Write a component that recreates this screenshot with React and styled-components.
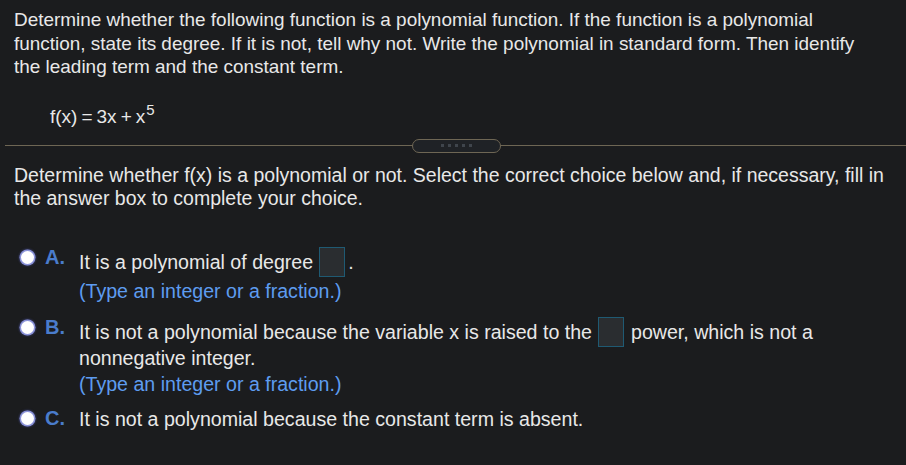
import React from "react";
import styled, { createGlobalStyle } from "styled-components";

const Global = createGlobalStyle`
  html, body { margin: 0; padding: 0; background: #1b1c1e; }
  body { font-family: "Liberation Sans", Arial, sans-serif; color: #e8e8e8; }
`;

const Page = styled.div`
  width: 906px;
  height: 465px;
  background: #1b1c1e;
  overflow: hidden;
  display: flex;
  flex-direction: column;
`;

const Para = styled.p`
  margin: ${(p) => p.$m || "0"};
  padding: 0 14px;
  font-size: ${(p) => p.$fs || "19.4px"};
  line-height: 23.5px;
  white-space: nowrap;
`;

const Formula = styled.div`
  margin: 27px 0 0 50px;
  font-size: 19px;
  line-height: 22px;
  white-space: nowrap;
`;

const Op = styled.span`
  margin: 0 4px;
`;

const Sup = styled.span`
  font-size: 15px;
  vertical-align: 8px;
  line-height: 0;
  margin-left: 1px;
`;

const DividerRow = styled.div`
  margin-top: 11px;
  margin-left: 5px;
  position: relative;
  height: 14px;
  display: flex;
  align-items: center;
`;

const Line = styled.div`
  flex: 1;
  height: 1px;
  background: #6e6654;
`;

const Pill = styled.div`
  position: absolute;
  left: 407px;
  top: 0;
  width: 87px;
  height: 12px;
  border: 1px solid #6e6654;
  border-radius: 7px;
  background: #1f2226;
  display: flex;
  align-items: center;
  justify-content: center;
  gap: 4px;
`;

const Dot = styled.span`
  width: 3px;
  height: 3px;
  background: #3f454c;
`;

const Options = styled.div`
  display: flex;
  flex-direction: column;
  margin-top: 36px;
  padding-left: 20px;
`;

const Option = styled.div`
  display: flex;
  align-items: flex-start;
  margin-top: ${(p) => p.$mt || "0"};
`;

const Radio = styled.span`
  flex: none;
  width: 13px;
  height: 13px;
  border-radius: 50%;
  background: #fff;
  box-shadow: 0 0 0 1.5px #8a92d8, 0 0 2px 2px rgba(90, 100, 200, 0.5);
  margin: ${(p) => p.$mt || "4px"} 0 0 1px;
`;

const Letter = styled.span`
  flex: none;
  width: 34px;
  margin-left: 11px;
  margin-top: ${(p) => p.$mt || "0"};
  color: #4a7ccc;
  font-weight: bold;
  font-size: 20px;
  line-height: 20px;
`;

const Body = styled.div`
  font-size: 19.6px;
  line-height: 24px;
  white-space: nowrap;
`;

const TextLine = styled.div`
  display: flex;
  align-items: center;
  height: 30px;
`;

const PlainLine = styled.div`
  line-height: 22px;
`;

const Hint = styled.div`
  color: #5e9cf0;
  line-height: 24px;
  margin-top: ${(p) => p.$mt || "2px"};
`;

const Box = styled.span`
  display: inline-block;
  box-sizing: border-box;
  width: 26px;
  height: 30px;
  margin: 0 ${(p) => p.$mr || "3px"} 0 6px;
  border: 1px solid #1f5a73;
  background: #2a2d30;
`;

export default function App() {
  return (
    <Page>
      <Global />
      <Para $m="8px 0 0 0" $fs="18.95px">
        Determine whether the following function is a polynomial function. If the function is a polynomial
        <br />
        function, state its degree. If it is not, tell why not. Write the polynomial in standard form. Then identify
        <br />
        the leading term and the constant term.
      </Para>
      <Formula>
        f(x)<Op>=</Op>3x<Op>+</Op>x<Sup>5</Sup>
      </Formula>
      <DividerRow>
        <Line />
        <Pill>
          <Dot />
          <Dot />
          <Dot />
          <Dot />
          <Dot />
        </Pill>
      </DividerRow>
      <Para $m="11px 0 0 0" $fs="19.5px">
        Determine whether f(x) is a polynomial or not. Select the correct choice below and, if necessary, fill in
        <br />
        the answer box to complete your choice.
      </Para>
      <Options>
        <Option>
          <Radio />
          <Letter>A.</Letter>
          <Body>
            <TextLine>
              It is a polynomial of degree<Box />.
            </TextLine>
            <Hint>(Type an integer or a fraction.)</Hint>
          </Body>
        </Option>
        <Option $mt="14px">
          <Radio />
          <Letter>B.</Letter>
          <Body>
            <TextLine>
              It is not a polynomial because the variable x is raised to the<Box $mr="7px" />power, which is not a
            </TextLine>
            <PlainLine>nonnegative integer.</PlainLine>
            <Hint $mt="3px">(Type an integer or a fraction.)</Hint>
          </Body>
        </Option>
        <Option $mt="11px">
          <Radio $mt="5px" />
          <Letter $mt="1px">C.</Letter>
          <Body>It is not a polynomial because the constant term is absent.</Body>
        </Option>
      </Options>
    </Page>
  );
}
